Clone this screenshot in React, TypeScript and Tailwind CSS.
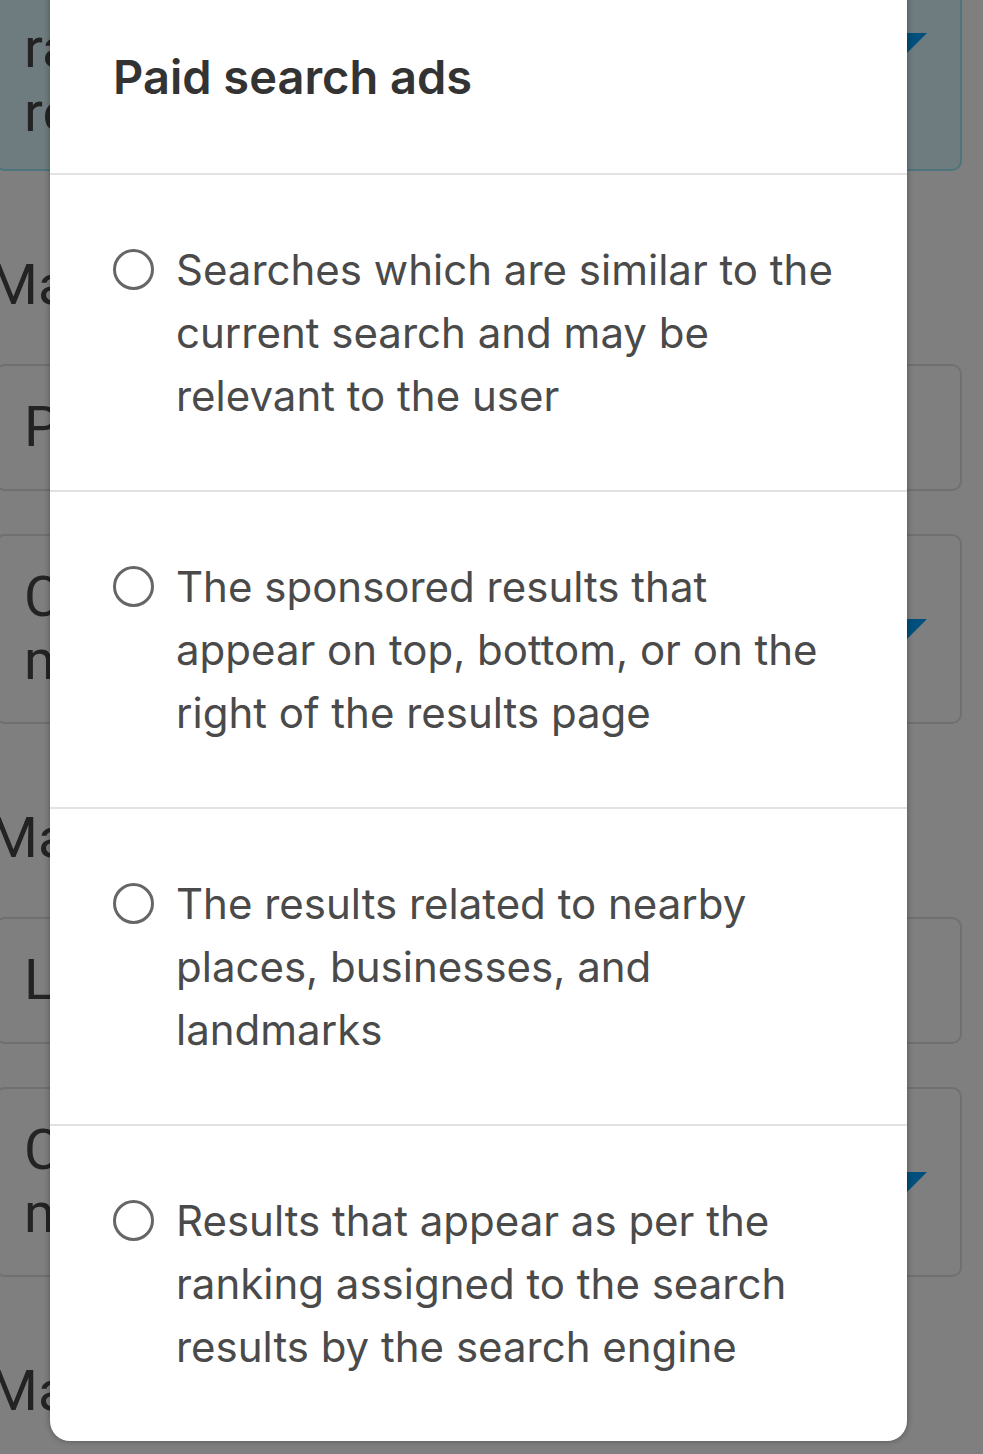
import React from "react";

const options = [
  "Searches which are similar to the current search and may be relevant to the user",
  "The sponsored results that appear on top, bottom, or on the right of the results page",
  "The results related to nearby places, businesses, and landmarks",
  "Results that appear as per the ranking assigned to the search results by the search engine",
];

const Caret = () => (
  <svg width="40" height="20" viewBox="0 0 40 20" className="shrink-0">
    <path d="M0 0 H40 L20 20 Z" fill="#009ef8" />
  </svg>
);

const MatchLabel = () => (
  <div className="ml-[-6px] pt-[82px] pb-[46px] leading-[65px] whitespace-nowrap">
    Match
  </div>
);

const Card: React.FC<{ lines: string[]; select?: boolean }> = ({
  lines,
  select,
}) => (
  <div className="flex items-center justify-between rounded-[10px] border-2 border-[#e0e0e0] py-[30px] pl-[27px] pr-[33px]">
    <div className="leading-[63px] whitespace-nowrap">
      {lines.map((l) => (
        <div key={l}>{l}</div>
      ))}
    </div>
    {select && <Caret />}
  </div>
);

export default function App() {
  return (
    <div className="relative h-[1454px] overflow-hidden bg-white">
      {/* page behind the dialog */}
      <div
        className="ml-[-5px] mr-[21px] mt-[-40px] text-[56px] text-[#464646]"
        style={{ fontFamily: "Roboto, 'Liberation Sans', sans-serif" }}
      >
        <div className="flex justify-between rounded-b-[10px] border-2 border-[#9be8f5] bg-[#def8fe] pt-[54px] pb-[25px] pl-[27px] pr-[33px]">
          <div className="leading-[64px] whitespace-nowrap">
            <div>ranking assigned to the</div>
            <div>results by the search</div>
          </div>
          <div className="mt-[17px]">
            <Caret />
          </div>
        </div>
        <MatchLabel />
        <Card lines={["People also ask"]} />
        <div className="mt-[43px]">
          <Card lines={["Choose a", "match"]} select />
        </div>
        <MatchLabel />
        <Card lines={["Local pack"]} />
        <div className="mt-[43px]">
          <Card lines={["Choose a", "match"]} select />
        </div>
        <MatchLabel />
      </div>

      {/* overlay */}
      <div className="absolute inset-0 bg-black/50" />

      {/* dialog */}
      <div
        className="absolute top-[-40px] left-[50px] w-[857px] rounded-b-[20px] bg-white shadow-[0_0_6px_rgba(0,0,0,0.35)]"
        style={{ fontFamily: "Inter, 'Noto Sans', sans-serif" }}
      >
        <div className="h-[213px] pt-[90px] pl-[63px]">
          <h2 className="text-[47px] leading-[54px] font-semibold text-[#333333]">
            Paid search ads
          </h2>
        </div>
        {options.map((o) => (
          <label
            key={o}
            className="flex gap-[22px] border-t-2 border-[#e2e2e2] py-[63px] pl-[63px] pr-[64px]"
          >
            <span className="mt-[11px] h-[41px] w-[41px] shrink-0 rounded-full border-[3px] border-[#666666]" />
            <span className="text-[42px] leading-[63px] text-[#4a4a4a]">
              {o}
            </span>
          </label>
        ))}
      </div>
    </div>
  );
}
